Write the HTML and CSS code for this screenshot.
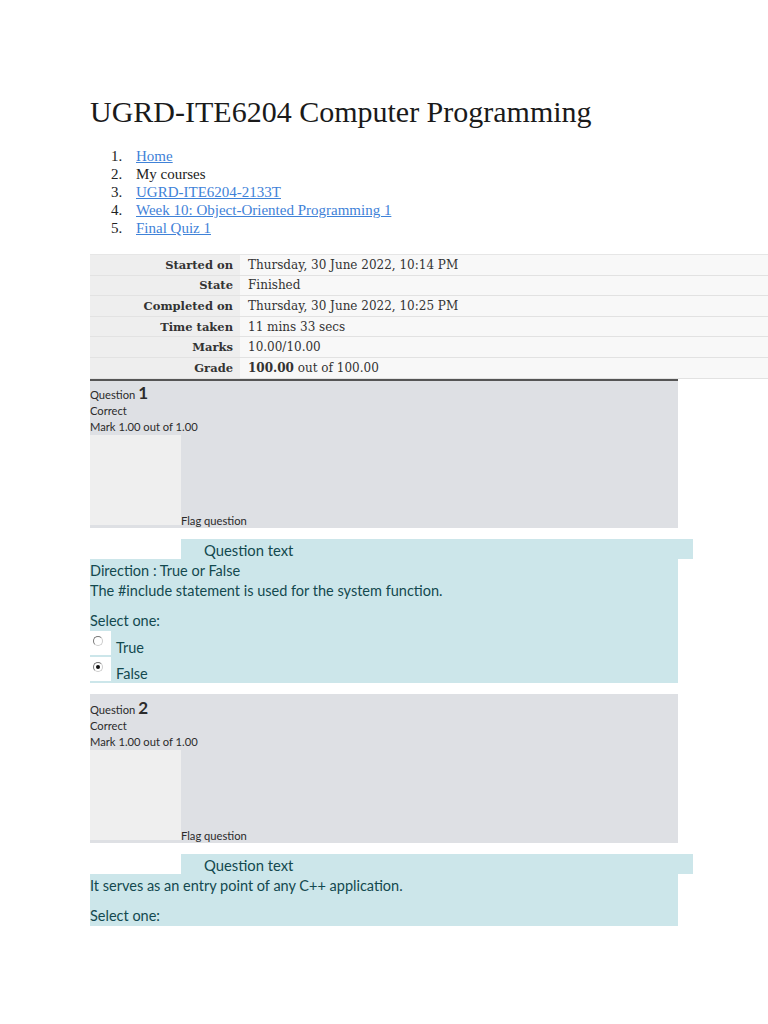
FILE: index.html
```html
<!DOCTYPE html>
<html>
<head>
<meta charset="utf-8">
<link rel="stylesheet" href="styles.css">
</head>
<body>
<div class="page">
  <h1 class="title">UGRD-ITE6204 Computer Programming</h1>
  <ol class="crumbs">
    <li><a href="#">Home</a></li>
    <li>My courses</li>
    <li><a href="#">UGRD-ITE6204-2133T</a></li>
    <li><a href="#">Week 10: Object-Oriented Programming 1</a></li>
    <li><a href="#">Final Quiz 1</a></li>
  </ol>
  <table class="summary">
    <tr><th>Started on</th><td>Thursday, 30 June 2022, 10:14 PM</td></tr>
    <tr><th>State</th><td>Finished</td></tr>
    <tr><th>Completed on</th><td>Thursday, 30 June 2022, 10:25 PM</td></tr>
    <tr><th>Time taken</th><td>11 mins 33 secs</td></tr>
    <tr><th>Marks</th><td>10.00/10.00</td></tr>
    <tr><th>Grade</th><td><b>100.00</b> out of 100.00</td></tr>
  </table>

  <div class="info first">
    <div class="qno">Question <span class="num">1</span></div>
    <div class="line">Correct</div>
    <div class="line">Mark 1.00 out of 1.00</div>
    <div class="flagrow"><div class="flagbox"></div><span class="flag">Flag question</span></div>
  </div>
  <div class="qtext">
    <div class="qhead">Question text</div>
    <div class="qbody">
      <div class="ln">Direction : True or False</div>
      <div class="ln gap">The #include statement is used for the system function.</div>
      <div class="ln">Select one:</div>
      <div class="opt"><span class="rbox"><span class="radio"></span></span><span class="olabel">True</span></div>
      <div class="opt"><span class="rbox"><span class="radio on"></span></span><span class="olabel">False</span></div>
    </div>
  </div>

  <div class="info">
    <div class="qno">Question <span class="num">2</span></div>
    <div class="line">Correct</div>
    <div class="line">Mark 1.00 out of 1.00</div>
    <div class="flagrow"><div class="flagbox"></div><span class="flag">Flag question</span></div>
  </div>
  <div class="qtext">
    <div class="qhead">Question text</div>
    <div class="qbody">
      <div class="ln gap">It serves as an entry point of any C++ application.</div>
      <div class="ln">Select one:</div>
    </div>
  </div>
</div>
</body>
</html>
```

FILE: styles.css
```css
html, body {
  margin: 0;
  padding: 0;
  background: #ffffff;
}
.page {
  padding-left: 90px;
  padding-top: 93px;
}
.title {
  margin: 0;
  font-family: "Liberation Serif", "Times New Roman", serif;
  font-weight: normal;
  font-size: 30px;
  line-height: 38px;
  color: #1a1a1a;
}
.crumbs {
  margin: 16px 0 0 0;
  padding-left: 36px;
  font-family: "Liberation Serif", "Times New Roman", serif;
  font-size: 15px;
  line-height: 18px;
  color: #222;
}
.crumbs li {
  padding-left: 10px;
}
.crumbs a {
  color: #3f82d8;
  text-decoration: underline;
}
.summary {
  margin-top: 17px;
  width: 678px;
  border-collapse: collapse;
  font-family: "DejaVu Serif", serif;
  font-size: 12px;
  color: #333;
  border-top: 1px solid #e6e6e6;
}
.summary tr {
  height: 20.6px;
}
.summary th {
  width: 150px;
  box-sizing: border-box;
  text-align: right;
  padding: 0 7px 0 0;
  font-weight: bold;
  font-size: 11.5px;
  background: #eeeeee;
  border-bottom: 1px solid #e2e2e2;
  color: #333;
}
.summary td {
  padding: 0 0 0 8px;
  background: #f8f8f8;
  border-bottom: 1px solid #e2e2e2;
}
.summary td b {
  font-weight: bold;
}
.info {
  width: 588px;
  background: #dee0e4;
  font-family: Lato, "Liberation Sans", sans-serif;
  font-size: 11.2px;
  color: #2b2b2b;
  padding-bottom: 3px;
  margin-top: 11px;
  border-top: 2px solid #dee0e4;
}
.info.first {
  margin-top: 0;
  border-top-color: #555;
}
.qno {
  height: 22px;
  line-height: 24px;
}
.qno .num {
  font-size: 17px;
  font-weight: bold;
}
.line {
  height: 16px;
  line-height: 16px;
}
.flagrow {
  display: flex;
  align-items: flex-end;
}
.flagbox {
  width: 91px;
  height: 90px;
  background: #efefef;
}
.flag {
  line-height: 14px;
  margin-bottom: -3px;
}
.qtext {
  margin-top: 11px;
  font-family: Lato, "Liberation Sans", sans-serif;
  color: #13494f;
}
.qhead {
  margin-left: 91px;
  width: 512px;
  box-sizing: border-box;
  padding-left: 23px;
  height: 20px;
  line-height: 22px;
  font-size: 14.8px;
  background: #cce6ea;
}
.qbody {
  width: 588px;
  background: #cce6ea;
  font-size: 14.5px;
  padding-top: 2px;
}
.ln {
  height: 20px;
  line-height: 20px;
}
.ln.gap {
  margin-bottom: 10px;
}
.opt {
  display: flex;
  align-items: flex-end;
  height: 26px;
}
.rbox {
  display: block;
  width: 21px;
  height: 24px;
  background: #ffffff;
  position: relative;
  align-self: flex-start;
}
.radio {
  position: absolute;
  left: 3px;
  top: 5px;
  width: 8px;
  height: 8px;
  border-radius: 50%;
  border: 1px solid #777;
  border-right-color: #ccc;
  border-bottom-color: #ccc;
  background: #fff;
}
.radio.on::after {
  content: "";
  position: absolute;
  left: 2px;
  top: 2px;
  width: 4px;
  height: 4px;
  border-radius: 50%;
  background: #111;
}
.olabel {
  margin-left: 5px;
  line-height: 18px;
}
```
